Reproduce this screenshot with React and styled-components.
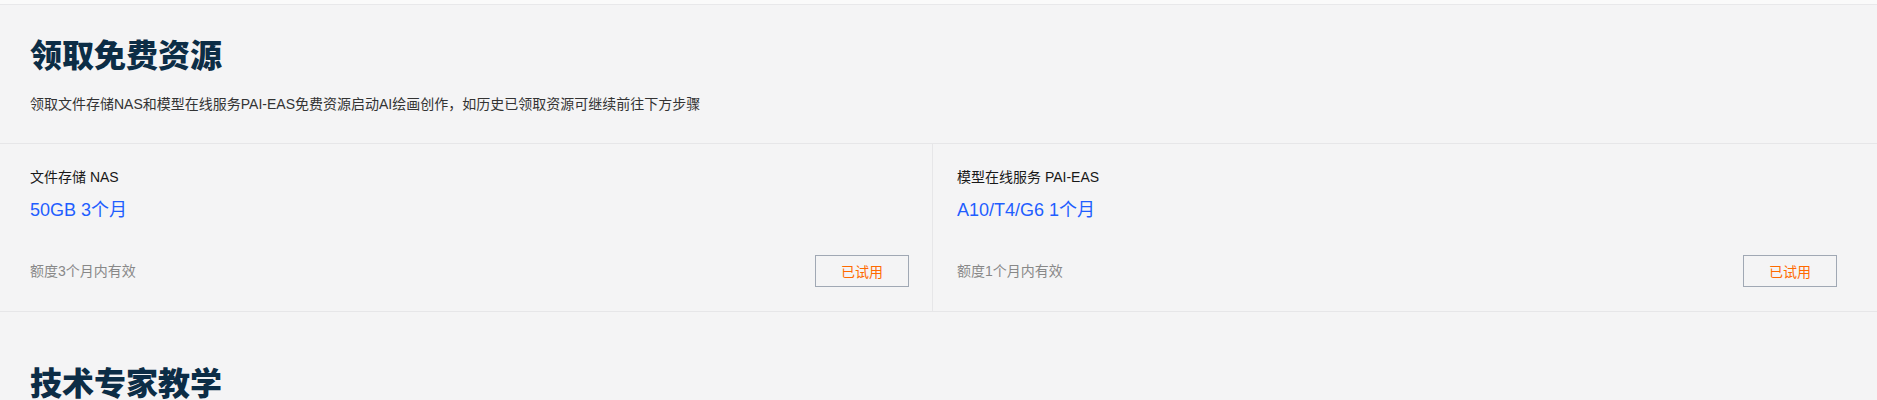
import styled, { createGlobalStyle } from "styled-components";

const GlobalStyle = createGlobalStyle`
  body {
    margin: 0;
    background: #ffffff;
    font-family: "Liberation Sans", "Noto Sans CJK SC", sans-serif;
  }
`;

const offers = [
  {
    name: "文件存储 NAS",
    amount: "50GB 3个月",
    note: "额度3个月内有效",
    action: "已试用",
  },
  {
    name: "模型在线服务 PAI-EAS",
    amount: "A10/T4/G6 1个月",
    note: "额度1个月内有效",
    action: "已试用",
  },
];

const App = () => {
  return (
    <Page>
      <GlobalStyle />
      <TopStrip />
      <Section>
        <Head>
          <Title>领取免费资源</Title>
          <Desc>
            领取文件存储NAS和模型在线服务PAI-EAS免费资源启动AI绘画创作，如历史已领取资源可继续前往下方步骤
          </Desc>
        </Head>
        <CardRow>
          {offers.map((o, i) => (
            <Card key={o.name} $last={i === offers.length - 1}>
              <CardName>{o.name}</CardName>
              <Amount>{o.amount}</Amount>
              <CardFoot>
                <Note>{o.note}</Note>
                <TryButton>{o.action}</TryButton>
              </CardFoot>
            </Card>
          ))}
        </CardRow>
      </Section>
      <NextSection>
        <Title>技术专家教学</Title>
      </NextSection>
    </Page>
  );
};

const Page = styled.div`
  width: 1877px;
  height: 400px;
  overflow: hidden;
  background: #f4f4f5;
`;

const TopStrip = styled.div`
  height: 4px;
  background: #fafafa;
  border-bottom: 1px solid #e8e8ea;
`;

const Section = styled.section`
  padding-top: 35px;
`;

const Head = styled.div`
  padding: 0 30px 28px;
  border-bottom: 1px solid #e6e6e8;
`;

const Title = styled.h2`
  margin: 0;
  font-size: 32px;
  line-height: 32px;
  font-weight: 900;
  color: #0c2d46;
`;

const Desc = styled.p`
  margin: 21px 0 0;
  font-size: 14px;
  line-height: 22px;
  color: #333333;
`;

const CardRow = styled.div`
  display: grid;
  grid-template-columns: 933px 1fr;
  border-bottom: 1px solid #e6e6e8;
`;

const Card = styled.div`
  display: flex;
  flex-direction: column;
  padding: ${(p) => (p.$last ? "22px 40px 24px 24px" : "22px 23px 24px 30px")};
  border-right: ${(p) => (p.$last ? "none" : "1px solid #e6e6e8")};
`;

const CardName = styled.div`
  font-size: 14px;
  line-height: 22px;
  color: #181818;
`;

const Amount = styled.div`
  margin-top: 9px;
  font-size: 18px;
  line-height: 26px;
  color: #1f5eff;
`;

const CardFoot = styled.div`
  margin-top: 32px;
  display: flex;
  align-items: center;
  justify-content: space-between;
`;

const Note = styled.span`
  font-size: 14px;
  line-height: 22px;
  color: #888888;
`;

const TryButton = styled.button`
  box-sizing: border-box;
  width: 94px;
  height: 32px;
  padding: 0;
  border: 1px solid #a0a8b4;
  background: transparent;
  font-family: inherit;
  font-size: 14px;
  color: #ff6a00;
  cursor: default;
`;

const NextSection = styled.section`
  padding: 56px 30px 0;
`;

export default App;
